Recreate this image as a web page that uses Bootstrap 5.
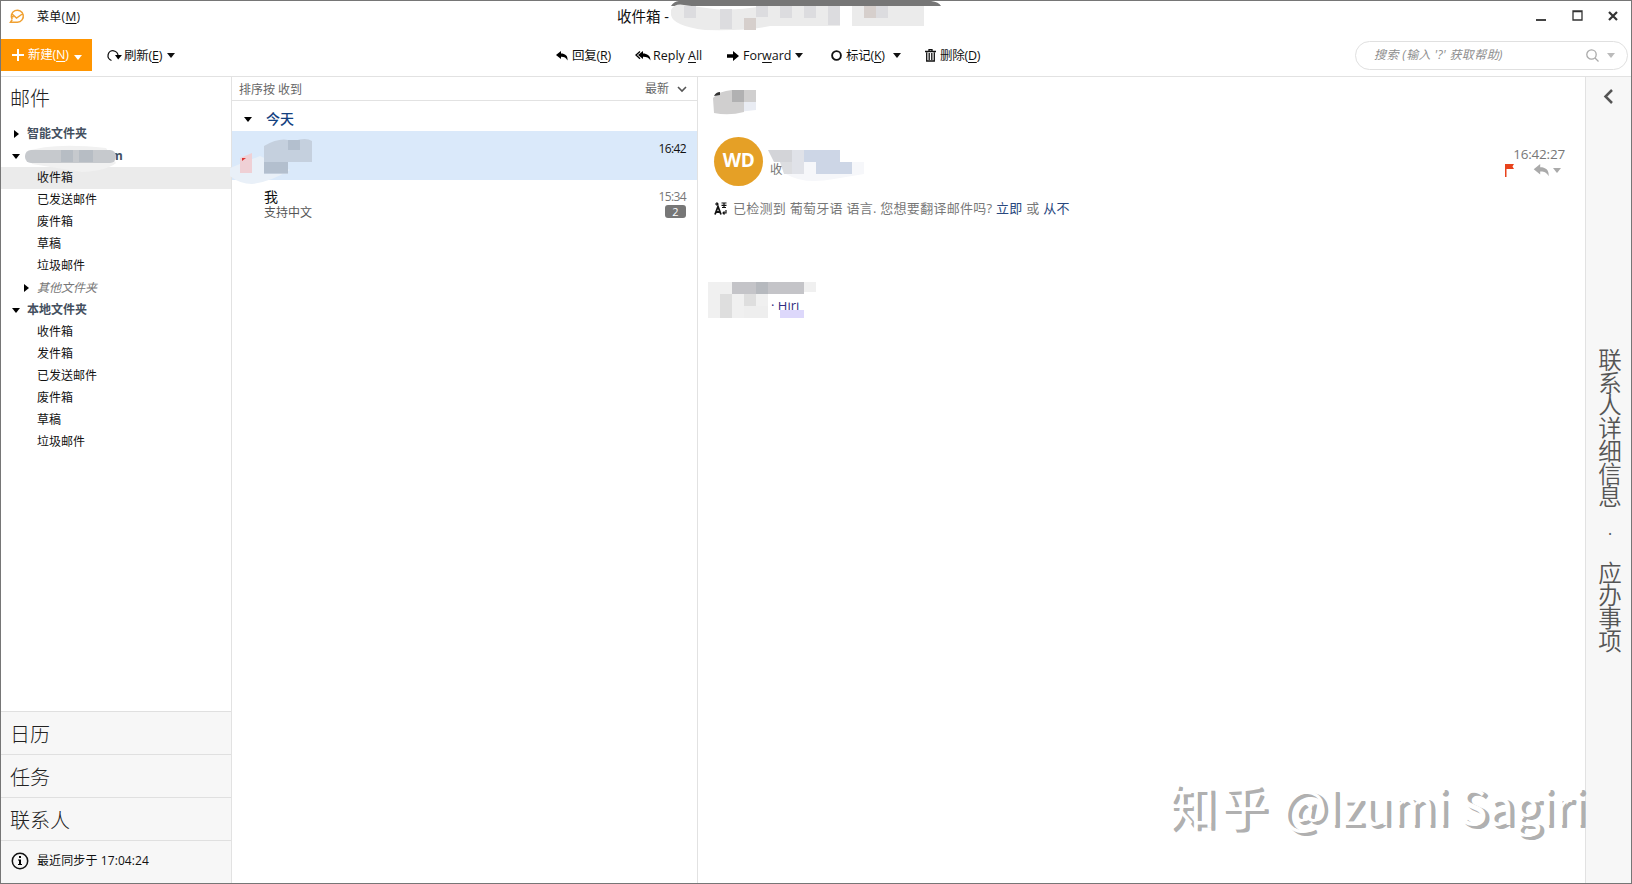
<!DOCTYPE html>
<html lang="zh-CN">
<head>
<meta charset="utf-8">
<meta name="viewport" content="width=device-width, initial-scale=1">
<title>收件箱</title>
<link href="https://cdn.jsdelivr.net/npm/bootstrap@5.3.0/dist/css/bootstrap.min.css" rel="stylesheet">
<style>
body{font-family:"Open Sans","Noto Sans CJK SC",sans-serif;font-size:12px;line-height:22px;color:#111;background:#fff;overflow:hidden}
.app{height:884px;border:1px solid #767676;overflow:hidden}
svg{display:block;flex:none}
u{text-underline-offset:2px}
.top{height:76px;border-bottom:1px solid #e2e2e2}
.titlebar{height:38px}
.menu-label{width:580px;margin-left:12px;line-height:31px;letter-spacing:.3px}
.doc-title{font-size:14.5px;line-height:31px}
.win{height:29px;gap:25px;margin-right:13px}
.toolbar{height:32px}
.btn-new{width:91px;height:32px;background:#ff9500;color:#fff;border-radius:0;border:0;font-size:12.5px;letter-spacing:-.2px;padding:0 10px 0 11px;gap:4px;line-height:34px;white-space:nowrap}
.btn-new:hover{background:#ff9500;color:#fff}
.tool{font-size:12.5px;white-space:nowrap;line-height:32px;letter-spacing:-.25px;padding:1px 0 0 0}
.caret{width:0;height:0;border:4px solid transparent;border-top:5px solid currentColor;border-bottom:0;flex:none}
.caret-r{width:0;height:0;border:4px solid transparent;border-left:5px solid currentColor;border-right:0;flex:none}
.search{width:273px;height:29px;border:1px solid #e0e0e0;border-radius:15px;color:#8e8e8e;font-style:italic;padding:0 11px 0 18px;font-size:12px;letter-spacing:.4px}
.side{width:231px;border-right:1px solid #e2e2e2}
.side h1{font-size:20px;font-weight:300;line-height:44px;height:46px;margin:0 0 0 9px;color:#222}
.tree>div{height:22px;line-height:22px;padding-left:36px}
.tree .grp{padding-left:11px;font-weight:700;color:#445060}
.tree .grp i,.tree .oth i{color:#000}
.tree .sel{background:#ebebeb}
.tree .oth{padding-left:23px;color:#777;font-style:italic}
.mod{height:43px;border-top:1px solid #e0e0e0;background:#f7f7f7;font-size:20px;font-weight:300;line-height:45px;padding-left:9px;color:#222}
.sync{height:43px;border-top:1px solid #e0e0e0;background:#f7f7f7;padding:0 0 2px 10px;gap:8px;letter-spacing:.1px}
.list{width:466px;border-right:1px solid #e2e2e2}
.sort{height:24px;border-bottom:1px solid #e2e2e2;color:#666;padding:1px 10px 0 7px;line-height:24px}
.day{height:30px;padding:6px 0 0 12px;font-size:14px;color:#14417f;font-weight:500;gap:14px}
.msg{height:48px;padding:9px 11px 0 32px;line-height:17px}
.msg.on{height:49px;background:#dae9fa}
.time{letter-spacing:-.6px}
.cnt{width:21px;height:13px;border-radius:3px;background:#777;color:#fff;font-size:11px;line-height:13px;text-align:center}
.reader{padding:0 20px 0 16px;color:#777}
.avatar{width:49px;height:49px;border-radius:50%;background:#e5a026;color:#fff;font:700 19px/46px "Open Sans",sans-serif;letter-spacing:-.4px;text-align:center;margin-top:60px}
.meta{margin-top:65px;font-size:13.5px;line-height:24px;letter-spacing:-.2px;text-align:right}
.trans{font-size:13px;line-height:22px;margin-top:11px;gap:5px;letter-spacing:.27px}
.trans a{color:#28477e;text-decoration:none}
.rail{width:46px;border-left:1px solid #e2e2e2;background:#f7f7f7;color:#555}
.rail .vert{font-size:23.5px;font-weight:350;line-height:22.7px;width:24px;text-align:center;margin-left:12px}
.smudge{position:absolute;left:0;top:0;pointer-events:none}
.wm{position:absolute;left:1167px;top:769px;font:400 47.5px/70px "Noto Sans CJK SC",sans-serif;color:#fff;text-shadow:4px 2px 0 #b0b0b0,4px 3px 0 #b0b0b0;white-space:nowrap;pointer-events:none}
.wm span{letter-spacing:4px}
</style>
</head>
<body>
<div class="app d-flex flex-column position-relative">
  <header class="top flex-shrink-0">
    <div class="titlebar d-flex">
      <svg style="margin:7px 0 0 8px" width="16" height="16" viewBox="0 0 16 16" fill="none" stroke="#f0a030" stroke-width="1.5"><path d="M3.300 11.500A6 6 0 1 1 8.500 14.200H1.500L3.300 11.500M2.500 5.500l5 4.500 6.500-4.500M2 8l2.500 1"/></svg>
      <div class="menu-label">菜单(<u>M</u>)</div>
      <div class="doc-title">收件箱 -</div>
      <div class="win d-flex align-items-center ms-auto">
        <svg width="11" height="12" viewBox="0 0 11 12"><path d="M0 10h10" stroke="#444" stroke-width="2"/></svg>
        <svg width="11" height="11" viewBox="0 0 11 11"><path d="M1 1h9v9H1zM1 1.5h9" fill="none" stroke="#333" stroke-width="1.3"/></svg>
        <svg width="10" height="10" viewBox="0 0 10 10"><path d="M1 1l8 8M9 1L1 9" stroke="#333" stroke-width="2.2"/></svg>
      </div>
    </div>
    <div class="toolbar d-flex align-items-center">
      <button class="btn btn-new d-flex align-items-center"><svg width="12" height="12" viewBox="0 0 12 12"><path d="M6 0v12M0 6h12" stroke="#fff" stroke-width="2"/></svg><span>新建(<u>N</u>)</span><i class="caret ms-auto mt-1"></i></button>
      <div class="tool d-flex align-items-center" style="margin-left:15px;width:449px;gap:2px"><svg width="15" height="13" viewBox="0 0 15 13"><path d="M4.500 11.500A5 5 0 1 1 11 7" fill="none" stroke="#111" stroke-width="1.300"/><path d="M8 6h7l-3.800 4.500z"/></svg><span>刷新(<u>E</u>)</span><i class="caret" style="margin-left:3px"></i></div>
      <div class="tool d-flex align-items-center" style="width:79px;gap:4px"><svg width="12" height="10" viewBox="0 0 12 10"><path d="M0 4l5-4v2.500c4 0 7 2 6.500 7C10 6.500 8 5.700 5 5.800V8z"/></svg><span>回复(<u>R</u>)</span></div>
      <div class="tool d-flex align-items-center" style="width:92px;gap:2px;letter-spacing:0"><svg width="16" height="10" viewBox="0 0 16 10"><path d="M3 4l5-4v2.500c4 0 7.500 2 7.500 7C14 6.500 11 5.700 8 5.800V8z"/><path d="M5 .5L1 4l4 3.700" fill="none" stroke="#000" stroke-width="1.300"/></svg><span>Reply <u>A</u>ll</span></div>
      <div class="tool d-flex align-items-center" style="width:104px;gap:4px;letter-spacing:0"><svg width="12" height="10" viewBox="0 0 12 10"><path d="M0 3.200h6V0l6 5-6 5V6.800H0z"/></svg><span>For<u>w</u>ard</span><i class="caret"></i></div>
      <div class="tool d-flex align-items-center" style="width:94px;gap:4px"><svg width="11" height="11" viewBox="0 0 10 10"><circle cx="5" cy="5" r="4" fill="none" stroke="#111" stroke-width="1.700"/></svg><span>标记(<u>K</u>)</span><i class="caret ms-1"></i></div>
      <div class="tool d-flex align-items-center" style="gap:4px"><svg width="11" height="13" viewBox="0 0 11 13"><path d="M0 2.500h11M4 2V.7h3V2M1.700 3.500v8.500h7.600V3.500M4.200 4v7M6.800 4v7" fill="none" stroke="#111" stroke-width="1.300"/></svg><span>删除(<u>D</u>)</span></div>
      <div class="search d-flex align-items-center ms-auto" style="margin-right:3px"><span>搜索 (输入 '?' 获取帮助)</span><svg class="ms-auto" style="margin-right:8px" width="13" height="13" viewBox="0 0 13 13" fill="none" stroke="#aaa" stroke-width="1.300"><circle cx="5.500" cy="5.500" r="4.700"/><path d="M9 9l3.500 3.500"/></svg><i class="caret" style="color:#bbb;margin-right:1px"></i></div>
    </div>
  </header>
  <div class="d-flex flex-grow-1">
    <nav class="side d-flex flex-column">
      <h1>邮件</h1>
      <div class="tree flex-grow-1">
        <div class="grp d-flex align-items-center"><i class="caret-r" style="margin-left:2px"></i><span style="margin-left:8px">智能文件夹</span></div>
        <div class="grp d-flex align-items-center"><i class="caret"></i><span style="margin-left:91px">m</span></div>
        <div class="sel">收件箱</div><div>已发送邮件</div><div>废件箱</div><div>草稿</div><div>垃圾邮件</div>
        <div class="oth d-flex align-items-center"><i class="caret-r"></i><span class="ms-2">其他文件夹</span></div>
        <div class="grp d-flex align-items-center"><i class="caret"></i><span style="margin-left:7px">本地文件夹</span></div>
        <div>收件箱</div><div>发件箱</div><div>已发送邮件</div><div>废件箱</div><div>草稿</div><div>垃圾邮件</div>
      </div>
      <div class="mod">日历</div><div class="mod">任务</div><div class="mod">联系人</div>
      <div class="sync d-flex align-items-center"><svg width="18" height="18" viewBox="0 0 18 18"><circle cx="9" cy="9" r="7.700" fill="none" stroke="#111" stroke-width="1.500"/><path d="M8 4h2v2H8zM7 7.500h3V12h1v1H7v-1h1V8.500H7z"/></svg><span>最近同步于 17:04:24</span></div>
    </nav>
    <section class="list">
      <div class="sort d-flex justify-content-between"><span>排序按 收到</span><span class="d-flex align-items-center gap-2">最新<svg width="10" height="7" viewBox="0 0 10 7"><path d="M1 1l4 4 4-4" fill="none" stroke="#555" stroke-width="1.600"/></svg></span></div>
      <div class="day d-flex align-items-center"><i class="caret text-black"></i>今天</div>
      <div class="msg on text-end time">16:42</div>
      <div class="msg d-flex justify-content-between"><div><div style="font-size:14px;line-height:15px">我</div><div style="color:#555">支持中文</div></div><div class="d-flex flex-column align-items-end" style="color:#777"><span class="time" style="line-height:16px">15:34</span><span class="cnt">2</span></div></div>
    </section>
    <main class="reader flex-grow-1">
      <div class="d-flex">
        <div class="avatar">WD</div>
        <div style="margin:82px 0 0 7px;font-size:12.5px">收</div>
        <div class="meta ms-auto"><div>16:42:27</div>
          <div class="d-flex align-items-center justify-content-end" style="height:8px;padding-right:4px;gap:3px"><svg style="margin-right:15px" width="10" height="13" viewBox="0 0 10 13"><path d="M0 0h9L7.500 2.500 9 5H1.500v8H0z" fill="#e8431c"/></svg><svg width="17" height="13" viewBox="0 0 12 10"><path fill="#aaa" d="M0 4l5-4v2.500c4 0 7 2 6.500 7C10 6.500 8 5.700 5 5.800V8z"/></svg><i class="caret" style="color:#aaa"></i></div>
        </div>
      </div>
      <div class="trans d-flex align-items-center"><svg width="14" height="13" viewBox="0 0 14 13"><path d="M1 12.500l3-8 3 8M2.200 10h3.600" fill="none" stroke="#111" stroke-width="1.800"/><path d="M1 2h3M2.500 .5l1.500 1.500-1.500 1.500M7.500 1h5M7.500 3.300h5M10 1v5M8 5.500h4M12 8v3H9M10.500 9.500L9 11l1.500 1.500" fill="none" stroke="#111" stroke-width="1.200"/></svg><span>已检测到 葡萄牙语 语言. 您想要翻译邮件吗? <a href="#">立即</a> 或 <a href="#">从不</a></span></div>
      <div style="margin:75px 0 0 57px;font-size:13px;color:#312c80">· Hiri</div>
    </main>
    <aside class="rail">
      <svg style="margin:12px 0 0 17px" width="11" height="15" viewBox="0 0 11 15"><path d="M9 1L2.500 7.500 9 14" fill="none" stroke="#555" stroke-width="2.500"/></svg>
      <div class="vert" style="margin-top:245px">联系人详细信息</div>
      <div class="vert" style="margin-top:14px">·</div>
      <div class="vert" style="margin-top:17px">应办事项</div>
    </aside>
  </div>
  <svg class="smudge" width="1630" height="340" viewBox="1 1 1630 340" aria-hidden="true">
    <path fill="#767676" d="M671 6q4-6 12-5h248q8 1 10 5z"/>
    <path fill="#ebebeb" d="M671 10q4-7 13-5l30 4q20 2 50-3h160v20H770q-20 5-65 4-32-4-34-15z"/>
    <path fill="#dcdcdf" d="M684 6h12v12h-12zM720 9h12v20h-12zM756 6h12v11h-12zM780 6h12v12h-12zM804 6h12v12h-12zM828 6h12v19h-12zM876 6h12v12h-12z"/><path fill="#d6cfcc" d="M744 18h12v12h-12zM864 6h12v12h-12z"/><path fill="#fff" d="M840 6h12v20h-12z"/>
    <path fill="#f1f1f1" d="M26 152q25-10 80-4l10 15q-10 8-34 9l-50-8z"/><rect x="25" y="150" width="91" height="13" rx="6" fill="#c6c9cd"/><path fill="#b7bdc4" d="M61 150h12v12H61zM79 150h14v12H79z"/>
    <path fill="#e9f0f8" d="M230 168l30-12 30 14q-20 12-38 14-12 0-22-8z"/><path fill="#efd0d5" d="M240 158l12-5v20h-12z"/><path fill="#d33" d="M242 158h4l-4 3z"/>
    <path fill="#c5d0de" d="M264 146q14-8 24-6l6 1q12-4 18 0v21h-24v12h-24z"/><path fill="#b3bfce" d="M288 140h12v10h-12zM264 162h24v11h-24z"/>
    <path fill="#e9ecf3" d="M732 90h24v20l-18 2z"/><path fill="#d0cfcf" d="M713 98q6-7 19-8h24v12h-12v10q-15 4-30 1z"/><path fill="#b1b1b2" d="M732 90h12v12h-12z"/><path d="M714 96q2-4 6-4v3z" fill="#333"/>
    <path fill="#f6f7fa" d="M782 162h82v12l-30 5q-30 6-48-5z"/><path fill="#d3d4d8" d="M768 150h24v12h-18z"/><path fill="#dcdde0" d="M780 162h24v12h-20z"/><path fill="#cdd6e6" d="M804 150h36v12h-36zM816 162h36v12h-36z"/><path fill="#e0e2e8" d="M792 150h12v24h-12z"/>
    <path fill="#f0f0f0" d="M708 282h108v10h-12v2H768v12H744v12h-36z"/><path fill="#c4c4c8" d="M732 282h72v12h-72z"/><path fill="#b6b9be" d="M756 282h12v12h-12z"/><path fill="#dedede" d="M720 294h12v12h-12zM744 294h12v12h-12zM720 306h12v12h-12z"/><path fill="#eee" d="M744 306h24v12h-24z"/><path fill="#ddd8fb" d="M780 310h24v8h-24z"/><path fill="#fff" d="M768 294h36v8h-36z"/>
  </svg>
  <div class="wm"><span>知乎</span> @Izumi Sagiri</div>
</div>
<script src="https://cdn.jsdelivr.net/npm/bootstrap@5.3.0/dist/js/bootstrap.bundle.min.js"></script>
</body>
</html>
